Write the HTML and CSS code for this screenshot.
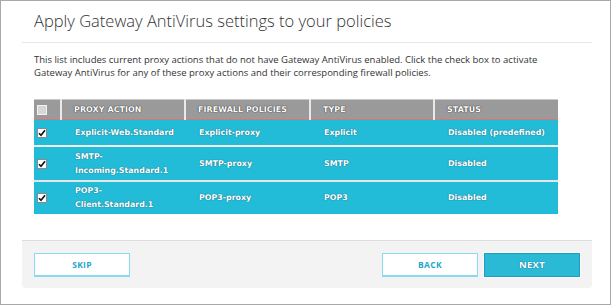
FILE: index.html
```html
<!DOCTYPE html>
<html>
<head>
<meta charset="utf-8">
<link rel="stylesheet" href="styles.css">
</head>
<body>
<div class="dialog">
  <div class="panel">
    <h1 class="title">Apply Gateway AntiVirus settings to your policies</h1>
    <div class="content">
      <p class="intro">This list includes current proxy actions that do not have Gateway AntiVirus enabled. Click the check box to activate Gateway AntiVirus for any of these proxy actions and their corresponding firewall policies.</p>
      <table class="grid">
        <thead>
          <tr>
            <th class="col-check"><span class="box box-head"></span></th>
            <th class="col-action">PROXY ACTION</th>
            <th class="col-policy">FIREWALL POLICIES</th>
            <th class="col-type">TYPE</th>
            <th class="col-status">STATUS</th>
          </tr>
        </thead>
        <tbody>
          <tr class="row-1">
            <td class="col-check"><span class="box"><svg viewBox="0 0 8 8" width="8" height="8"><path d="M1 4.2 L3 6.3 L7 1.2" fill="none" stroke="#111" stroke-width="1.6"/></svg></span></td>
            <td>Explicit-Web.Standard</td>
            <td>Explicit-proxy</td>
            <td>Explicit</td>
            <td>Disabled (predefined)</td>
          </tr>
          <tr class="row-2">
            <td class="col-check"><span class="box"><svg viewBox="0 0 8 8" width="8" height="8"><path d="M1 4.2 L3 6.3 L7 1.2" fill="none" stroke="#111" stroke-width="1.6"/></svg></span></td>
            <td>SMTP-<br>Incoming.Standard.1</td>
            <td>SMTP-proxy</td>
            <td>SMTP</td>
            <td>Disabled</td>
          </tr>
          <tr class="row-3">
            <td class="col-check"><span class="box"><svg viewBox="0 0 8 8" width="8" height="8"><path d="M1 4.2 L3 6.3 L7 1.2" fill="none" stroke="#111" stroke-width="1.6"/></svg></span></td>
            <td>POP3-<br>Client.Standard.1</td>
            <td>POP3-proxy</td>
            <td>POP3</td>
            <td>Disabled</td>
          </tr>
        </tbody>
      </table>
    </div>
    <div class="footer">
      <button class="btn">SKIP</button>
      <div class="footer-right">
        <button class="btn">BACK</button>
        <button class="btn btn-primary">NEXT</button>
      </div>
    </div>
  </div>
</div>
</body>
</html>
```
FILE: styles.css
```css
html, body {
  margin: 0;
  padding: 0;
  background: #ffffff;
}

.dialog {
  width: 611px;
  height: 305px;
  border: 1px solid #a9a9a9;
  background: #ffffff;
  padding: 0 17px 0 21px;
  box-sizing: border-box;
}

.panel {
  width: 570px;
}

.title {
  margin: 0;
  padding: 10px 0 0 12px;
  height: 42px;
  box-sizing: border-box;
  border-bottom: 1px solid #e6e6e6;
  font-family: "Open Sans", sans-serif;
  font-weight: 300;
  font-size: 16.5px;
  line-height: 20px;
  color: #333333;
}

.content {
  padding: 0 12px;
}

.intro {
  margin: 10px 0 0 0;
  font-family: "Open Sans", sans-serif;
  font-size: 9.5px;
  line-height: 13px;
  color: #333333;
  width: 520px;
}

.grid {
  margin-top: 20px;
  width: 524px;
  border-collapse: collapse;
  font-family: "DejaVu Sans", Verdana, sans-serif;
  font-weight: bold;
  font-size: 7.9px;
  color: #ffffff;
}

.grid th {
  background: #9a9a9a;
  text-align: left;
  height: 19px;
  padding: 0 0 0 12px;
  border-left: 2px solid #e9e9e9;
  border-bottom: 1px solid #d9776e;
  border-top: 1px solid #c9c9c9;
  text-shadow: 0 0 1px #333, 0 0 1px #333;
  letter-spacing: 0.1px;
}

.grid th.col-check {
  border-left: none;
  padding: 0 0 0 3px;
}

.col-check { width: 23px; }
.col-action { width: 110px; }
.col-policy { width: 111px; }
.col-type { width: 110px; }

.grid td {
  background: #23bcd8;
  padding: 0 0 0 14px;
  text-shadow: 0 0 1px #17748a, 0 0 1px #17748a;
  line-height: 14px;
}

.grid td.col-check {
  padding: 0 0 0 3px;
}

.row-1 td { height: 25px; }
.row-2 td { height: 33px; border-top: 2px solid #f0f0f0; }
.row-3 td { height: 32px; border-top: 2px solid #e6e6e6; }

.box {
  display: flex;
  align-items: center;
  justify-content: center;
  width: 8px;
  height: 8px;
  background: #ffffff;
  border: 1px solid #8a8a8a;
}

.box-head {
  background: #d6d6d6;
  border: 1px solid #f2f2f2;
}

.footer {
  margin-top: 26px;
  height: 48px;
  box-sizing: border-box;
  background: #f3f3f3;
  border-top: 1px solid #dddddd;
  border-radius: 0 0 4px 4px;
  display: flex;
  justify-content: space-between;
  align-items: center;
  padding: 0 12px;
}

.footer-right {
  display: flex;
  gap: 6px;
}

.btn {
  width: 96px;
  height: 24px;
  box-sizing: border-box;
  background: #ffffff;
  border: 1px solid #86dcee;
  border-bottom-width: 2px;
  color: #1fa6cb;
  font-family: "Open Sans", sans-serif;
  font-weight: bold;
  font-size: 8.5px;
  letter-spacing: 0.3px;
  padding: 0;
}

.btn-primary {
  background: #2bbad6;
  border: 1px solid #1a9fbf;
  color: #ffffff;
  font-size: 9.5px;
  text-shadow: 0 0 1px #137a96, 0 0 1px #137a96;
  outline: 1px solid #ffffff;
}
```
